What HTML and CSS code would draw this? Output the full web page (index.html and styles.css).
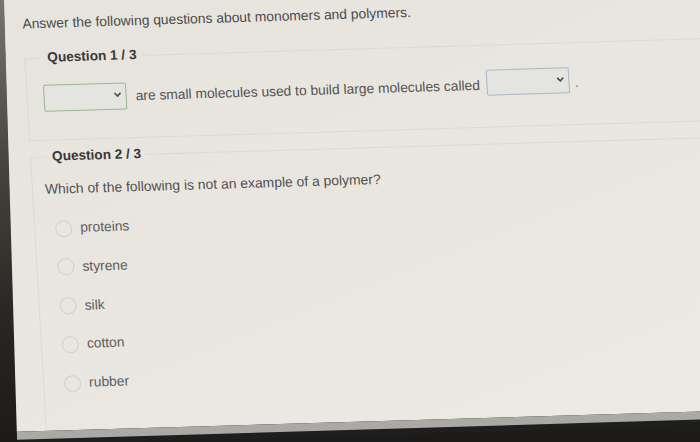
FILE: index.html
```html
<!DOCTYPE html>
<html lang="en">
<head>
<meta charset="utf-8">
<title>Monomers and polymers</title>
<link rel="stylesheet" href="styles.css">
</head>
<body>
<div class="screen">
  <div class="content">
    <h1 class="title">Answer the following questions about monomers and polymers.</h1>

    <fieldset class="question q1">
      <legend>Question 1 / 3</legend>
      <div class="fill-row">
        <div class="select select-green">
          <svg class="chev" viewBox="0 0 8 6" width="8" height="6"><polyline points="1,1.2 4,4.4 7,1.2" fill="none" stroke="#4a4a4a" stroke-width="1.6"/></svg>
        </div>
        <span class="fill-text">are small molecules used to build large molecules called</span>
        <div class="select select-blue">
          <svg class="chev" viewBox="0 0 8 6" width="8" height="6"><polyline points="1,1.2 4,4.4 7,1.2" fill="none" stroke="#4a4a4a" stroke-width="1.6"/></svg>
        </div>
        <span class="period">.</span>
      </div>
    </fieldset>

    <fieldset class="question q2">
      <legend>Question 2 / 3</legend>
      <p class="prompt">Which of the following is not an example of a polymer?</p>
      <ul class="options">
        <li class="option"><span class="radio"></span><span class="label">proteins</span></li>
        <li class="option"><span class="radio"></span><span class="label">styrene</span></li>
        <li class="option"><span class="radio"></span><span class="label">silk</span></li>
        <li class="option"><span class="radio"></span><span class="label">cotton</span></li>
        <li class="option"><span class="radio"></span><span class="label">rubber</span></li>
      </ul>
    </fieldset>
  </div>
</div>
</body>
</html>
```

FILE: styles.css
```css
html, body {
  margin: 0;
  padding: 0;
  width: 700px;
  height: 442px;
  overflow: hidden;
}

body {
  background: linear-gradient(180deg, #78746f 0%, #4a4541 35%, #2a2724 70%, #1c1b1a 100%);
}

.screen {
  box-sizing: content-box;
  margin-left: 4px;
  width: 716px;
  height: 432px;
  background: linear-gradient(160deg, #e7e4de 0%, #e9e6e0 45%, #eceae5 100%);
  border-bottom: 8px solid #aaa9a5;
  box-shadow: 0 6px 0 #1e1e1e;
  transform-origin: 0 0;
  transform: rotate(-1.7deg);
  font-family: "Liberation Sans", Arial, sans-serif;
  color: #4d4d4d;
  overflow: hidden;
}

.content {
  padding: 16px 0 0 17px;
  transform-origin: 0 0;
  transform: skewX(1.6deg);
}

.title {
  margin: 0;
  font-size: 13.85px;
  line-height: 16px;
  font-weight: normal;
  color: #4a4a4a;
}

.question {
  margin: 19px 0 0 0;
  border: 1px solid #dcd9d3;
  border-right: none;
  min-width: 0;
}

.question legend {
  padding: 0 6px;
  font-size: 13.6px;
  line-height: 16px;
  font-weight: bold;
  color: #383838;
}

.q1 {
  padding: 19px 0 28px 16px;
}

.fill-row {
  display: flex;
  align-items: center;
  height: 27px;
}

.select {
  box-sizing: border-box;
  position: relative;
  width: 83px;
  height: 27px;
  background: #e4e5e1;
  border-radius: 2px;
}

.select-green {
  border: 1.5px solid #97b692;
}

.select-blue {
  height: 26px;
  border: 1.5px solid #a9b7c6;
  margin: -5px 0 0 7px;
}

.chev {
  position: absolute;
  right: 4px;
  top: 8px;
}

.fill-text {
  margin-left: 9px;
  font-size: 13.8px;
  line-height: 16px;
  color: #535353;
}

.period {
  margin-left: 5px;
  font-size: 13px;
  color: #777;
}

.q2 {
  margin-top: 8px;
  padding: 16px 0 0 12px;
  height: 280px;
  border-bottom: none;
}

.q2 legend {
  margin-left: 3px;
}

.prompt {
  margin: 0;
  font-size: 13.9px;
  line-height: 16px;
  color: #505050;
}

.options {
  list-style: none;
  margin: 24px 0 0 8px;
  padding: 0;
  display: flex;
  flex-direction: column;
  gap: 22.75px;
}

.option {
  display: flex;
  align-items: center;
  height: 16px;
}

.radio {
  box-sizing: border-box;
  width: 17px;
  height: 17px;
  border-radius: 50%;
  border: 1.5px solid #d2cfc9;
  background: #e8e6e1;
}

.label {
  margin-left: 8px;
  font-size: 13.8px;
  line-height: 16px;
  color: #5c5c5c;
}
```
